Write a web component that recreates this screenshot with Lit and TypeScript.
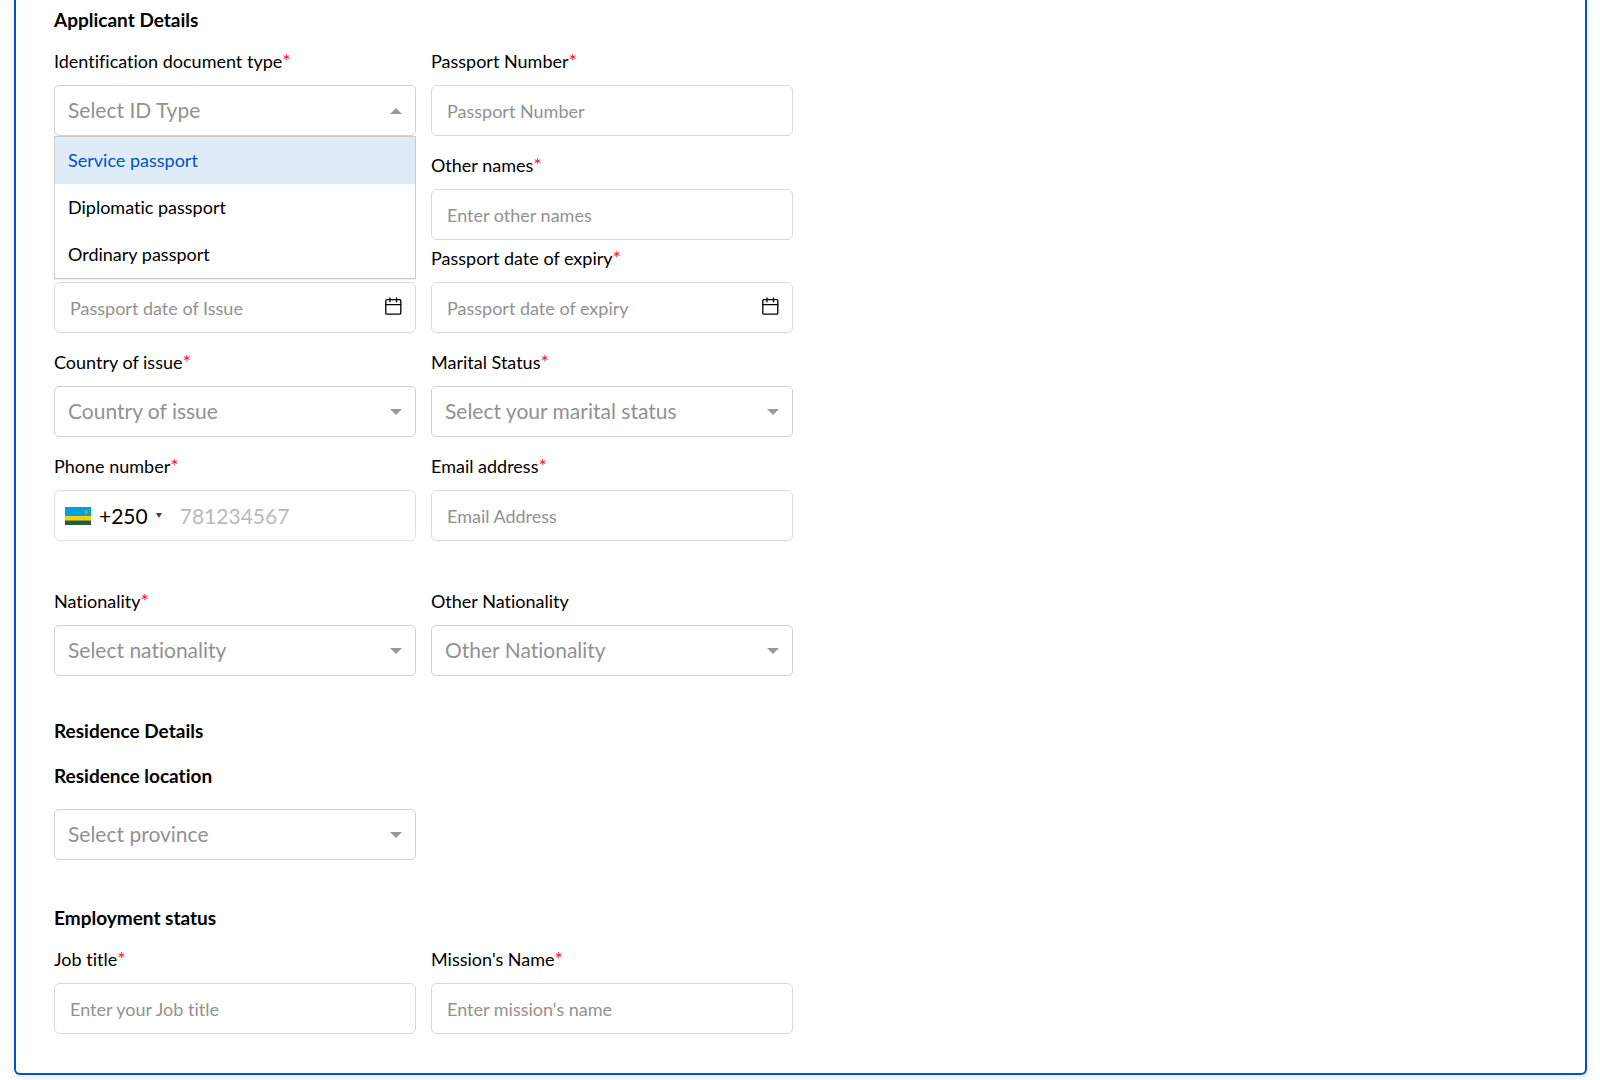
import { LitElement, html, css, svg, nothing } from "lit";
import { customElement, property, state } from "lit/decorators.js";

const shared = css`
  *,
  *::before,
  *::after {
    box-sizing: border-box;
  }
  .label {
    display: block;
    font-size: 18px;
    line-height: 24px;
    margin-bottom: 12px;
    color: #000;
  }
  .required {
    font-size: 20px;
    line-height: 1;
    color: #ff1238;
  }
  .box {
    display: block;
    width: 100%;
    height: 51px;
    margin: 0;
    background: #fff;
    font-family: inherit;
    font-variant-ligatures: none;
    outline: none;
  }
`;

const labelFor = (id: string, text: string, required: boolean) =>
  text
    ? html`<label class="label" for=${id}>${text}${required ? html`<span class="required">*</span>` : nothing}</label>`
    : nothing;

@customElement("text-field")
export class TextField extends LitElement {
  @property() label = "";
  @property() placeholder = "";
  @property() type = "text";
  @property({ type: Boolean }) required = false;
  @property({ type: Boolean }) date = false;

  static styles = [
    shared,
    css`
      :host {
        display: block;
        min-width: 0;
      }
      .box {
        display: flex;
        align-items: center;
        border: 1px solid #d5dae0;
        border-radius: 6px;
        padding: 0 12px 0 15px;
      }
      .box:focus-within {
        border-color: #0052cc;
      }
      .input {
        flex: 1;
        min-width: 0;
        height: 100%;
        border: 0;
        padding: 0;
        background: none;
        font: inherit;
        font-size: 18px;
        font-variant-ligatures: none;
        color: #000;
        outline: none;
      }
      .input::placeholder {
        color: #929292;
        opacity: 1;
      }
      .calendar {
        display: flex;
        border: 0;
        padding: 0;
        margin-bottom: 4px;
        background: none;
        cursor: pointer;
      }
      .icon {
        width: 20px;
        height: 20px;
      }
    `,
  ];

  render() {
    return html`
      ${labelFor("control", this.label, this.required)}
      <div class="box">
        <input
          class="input"
          id="control"
          type=${this.type}
          placeholder=${this.placeholder}
          aria-label=${this.label || this.placeholder}
        />
        ${this.date
          ? html`<button class="calendar" type="button" aria-label="Open calendar">
              <svg class="icon" viewBox="0 0 20 20" fill="none" stroke="#000" stroke-width="1.3" stroke-linecap="round">
                <rect x="2.8" y="3.7" width="15" height="14.5" rx="1" />
                <path d="M2.8 8.7h15M7 1.8v4M13.5 1.8v4" />
              </svg>
            </button>`
          : nothing}
      </div>
    `;
  }
}

@customElement("select-field")
export class SelectField extends LitElement {
  @property() label = "";
  @property() placeholder = "";
  @property({ type: Boolean }) required = false;
  @property({ type: Boolean, reflect: true }) open = false;
  @property({ attribute: false }) options: string[] = [];
  @state() private value = "";
  @state() private active = 0;

  static styles = [
    shared,
    css`
      :host {
        display: block;
        min-width: 0;
      }
      .wrap {
        position: relative;
      }
      .box {
        appearance: none;
        border: 1px solid #d0d0d0;
        border-radius: 5px;
        padding: 0 36px 2px 13px;
        font-size: 21px;
        line-height: 28px;
        color: #929292;
      }
      .box:focus {
        border-color: #b8b8b8;
      }
      .box.chosen {
        color: #000;
      }
      .caret {
        position: absolute;
        right: 14px;
        top: 23px;
        width: 12px;
        height: 6px;
        fill: #999;
        pointer-events: none;
      }
      .list {
        position: absolute;
        z-index: 2;
        left: 0;
        right: 0;
        top: 100%;
        margin: 0;
        padding: 0;
        list-style: none;
        background: #fff;
        border: 1px solid #ccc;
        box-shadow: 0 1px 0 rgba(0, 0, 0, 0.06);
      }
      .option {
        padding: 0 13px;
        font-size: 18px;
        line-height: 47px;
        color: #000;
        cursor: pointer;
      }
      .option.active {
        background: #deecf8;
        color: #0052cc;
      }
    `,
  ];

  private choose(option: string) {
    this.value = option;
    this.open = false;
  }

  render() {
    return html`
      ${labelFor("control", this.label, this.required)}
      <div class="wrap">
        <select
          class="box ${this.value ? "chosen" : ""}"
          id="control"
          aria-label=${this.label || this.placeholder}
          .value=${this.value}
          @change=${(e: Event) => this.choose((e.target as HTMLSelectElement).value)}
        >
          <option value="">${this.placeholder}</option>
          ${this.options.map((o) => html`<option ?selected=${o === this.value}>${o}</option>`)}
        </select>
        <svg class="caret" viewBox="0 0 12 6" aria-hidden="true">
          ${this.open ? svg`<path d="M0 6 6 0l6 6z" />` : svg`<path d="M0 0h12L6 6z" />`}
        </svg>
        ${this.open
          ? html`<ul class="list" role="listbox">
              ${this.options.map(
                (o, i) => html`<li
                  class="option ${i === this.active ? "active" : ""}"
                  role="option"
                  aria-selected=${i === this.active ? "true" : "false"}
                  @mouseenter=${() => (this.active = i)}
                  @click=${() => this.choose(o)}
                >
                  ${o}
                </li>`,
              )}
            </ul>`
          : nothing}
      </div>
    `;
  }
}

@customElement("phone-field")
export class PhoneField extends LitElement {
  @property() label = "";
  @property() placeholder = "";
  @property() code = "";
  @property({ type: Boolean }) required = false;

  static styles = [
    shared,
    css`
      :host {
        display: block;
        min-width: 0;
      }
      .box {
        display: flex;
        align-items: center;
        border: 1px solid #dde1e6;
        border-radius: 6px;
        padding: 0 10px;
      }
      .country {
        display: flex;
        align-items: center;
        height: 100%;
        border: 0;
        padding: 0;
        background: none;
        font: inherit;
        font-size: 21px;
        color: #000;
        cursor: pointer;
      }
      .flag {
        width: 26px;
        height: 18px;
        margin-right: 8px;
      }
      .arrow {
        width: 6px;
        height: 5px;
        margin-left: 8px;
        fill: #444;
      }
      .input {
        flex: 1;
        min-width: 0;
        height: 100%;
        margin-left: 18px;
        border: 0;
        padding: 0;
        background: none;
        font: inherit;
        font-size: 21px;
        color: #000;
        outline: none;
      }
      .input::placeholder {
        color: #b4bcc0;
        opacity: 1;
      }
    `,
  ];

  render() {
    return html`
      ${labelFor("control", this.label, this.required)}
      <div class="box">
        <button class="country" type="button" aria-haspopup="listbox">
          <svg class="flag" viewBox="0 0 26 18" role="img" aria-label="Rwanda">
            <rect width="26" height="9.5" fill="#00a1de" />
            <rect y="9" width="26" height="4.8" fill="#fad201" />
            <rect y="13.5" width="26" height="4.5" fill="#20603d" />
            <path
              d="M21.3 2l.5 1.7 1.6-.8-.8 1.6 1.7.5-1.7.5.8 1.6-1.6-.8-.5 1.7-.5-1.7-1.6.8.8-1.6-1.7-.5 1.7-.5-.8-1.6 1.6.8z"
              fill="#8fae3c"
            />
          </svg>
          <span>${this.code}</span>
          <svg class="arrow" viewBox="0 0 6 5" aria-hidden="true"><path d="M0 0h6L3 5z" /></svg>
        </button>
        <input class="input" id="control" type="tel" placeholder=${this.placeholder} />
      </div>
    `;
  }
}

@customElement("app-root")
export class AppRoot extends LitElement {
  private documentTypes = ["Service passport", "Diplomatic passport", "Ordinary passport"];

  static styles = css`
    *,
    *::before,
    *::after {
      box-sizing: border-box;
    }
    :host {
      display: block;
      padding: 0 13px 5px 14px;
      background: #fff;
      font-family: Lato, "Open Sans", sans-serif;
      font-variant-ligatures: none;
      color: #000;
    }
    .card {
      padding: 8px 38px 39px;
      background: #fff;
      border: 2px solid #0052cc;
      border-top: 0;
      border-radius: 0 0 6px 6px;
      box-shadow: 0 4px 10px rgba(0, 0, 0, 0.08);
    }
    .heading {
      margin: 0;
      font-size: 19px;
      line-height: 24px;
      font-weight: 700;
    }
    .section + .section {
      margin-top: 43px;
    }
    .section + .section.employment {
      margin-top: 46px;
    }
    .subheading {
      margin: 21px 0;
    }
    .grid {
      display: grid;
      grid-template-columns: repeat(4, minmax(0, 1fr));
      column-gap: 15px;
      margin-top: 17px;
    }
    .grid.flush {
      margin-top: 0;
    }
    .left {
      grid-column: 1;
    }
    .right {
      grid-column: 2;
    }
    .bottom {
      align-self: end;
    }
    .row {
      margin-bottom: 17px;
    }
    .tight {
      margin-bottom: 6px;
    }
    .loose {
      margin-bottom: 48px;
    }
  `;

  render() {
    return html`
      <form class="card">
        <section class="section">
          <h2 class="heading">Applicant Details</h2>
          <div class="grid">
            <select-field class="left row" label="Identification document type" required open
              placeholder="Select ID Type" .options=${this.documentTypes}></select-field>
            <text-field class="right row" label="Passport Number" required placeholder="Passport Number"></text-field>
            <text-field class="right tight" label="Other names" required placeholder="Enter other names"></text-field>
            <text-field class="left row bottom" date placeholder="Passport date of Issue"></text-field>
            <text-field class="right row" label="Passport date of expiry" required date
              placeholder="Passport date of expiry"></text-field>
            <select-field class="left row" label="Country of issue" required placeholder="Country of issue"></select-field>
            <select-field class="right row" label="Marital Status" required
              placeholder="Select your marital status"></select-field>
            <phone-field class="left loose" label="Phone number" required code="+250" placeholder="781234567"></phone-field>
            <text-field class="right loose" label="Email address" required type="email"
              placeholder="Email Address"></text-field>
            <select-field class="left" label="Nationality" required placeholder="Select nationality"></select-field>
            <select-field class="right" label="Other Nationality" placeholder="Other Nationality"></select-field>
          </div>
        </section>
        <section class="section">
          <h2 class="heading">Residence Details</h2>
          <h3 class="heading subheading">Residence location</h3>
          <div class="grid flush">
            <select-field class="left" placeholder="Select province"></select-field>
          </div>
        </section>
        <section class="section employment">
          <h2 class="heading">Employment status</h2>
          <div class="grid">
            <text-field class="left" label="Job title" required placeholder="Enter your Job title"></text-field>
            <text-field class="right" label="Mission's Name" required placeholder="Enter mission's name"></text-field>
          </div>
        </section>
      </form>
    `;
  }
}
